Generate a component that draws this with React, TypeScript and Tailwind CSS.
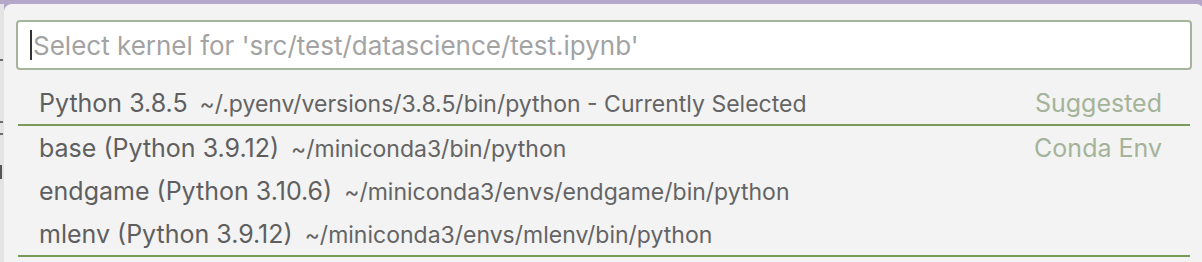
import React from "react";

type Kernel = {
  label: string;
  description: string;
  tag?: string;
};

const groups: Kernel[][] = [
  [
    {
      label: "Python 3.8.5",
      description: "~/.pyenv/versions/3.8.5/bin/python - Currently Selected",
      tag: "Suggested",
    },
  ],
  [
    { label: "base (Python 3.9.12)", description: "~/miniconda3/bin/python", tag: "Conda Env" },
    { label: "endgame (Python 3.10.6)", description: "~/miniconda3/envs/endgame/bin/python" },
    { label: "mlenv (Python 3.9.12)", description: "~/miniconda3/envs/mlenv/bin/python" },
  ],
];

function KernelRow({ kernel }: { kernel: Kernel }) {
  return (
    <div className="flex items-center h-[43px] pt-[3px] pl-[21px] pr-[28px] text-[25px] whitespace-nowrap">
      <span className="text-[#5f5f5f]">{kernel.label}</span>
      <span className="ml-[12px] text-[23px] text-[#646464]">{kernel.description}</span>
      <span className="ml-auto text-[#a4b399]">{kernel.tag}</span>
    </div>
  );
}

export default function App() {
  return (
    <div
      className="w-[1202px] h-[262px] flex flex-col bg-[#b4a7c9] overflow-hidden"
      style={{ fontFamily: "Inter, 'Noto Sans', sans-serif" }}
    >
      <div className="h-[4px] shrink-0" />
      <div className="flex flex-1">
        {/* editor behind the picker */}
        <div className="w-[4px] bg-[#e4e4e4] flex flex-col">
          <div className="h-[55px]" />
          <div className="h-[2px] w-[3px] bg-[#6b6b6b]" />
          <div className="h-[60px]" />
          <div className="h-[2px] w-[3px] bg-[#6b6b6b]" />
          <div className="h-[10px]" />
          <div className="h-[2px] w-[3px] bg-[#6b6b6b]" />
          <div className="h-[30px]" />
          <div className="h-[14px] w-[2px] bg-[#555]" />
        </div>
        <div className="flex-1 -mr-[2px] bg-[#f3f3f3] rounded-t-[8px] pt-[16px] pl-[12px] pr-[12px]">
          <div className="h-[50px] bg-white border-2 border-[#a5b49a] rounded-[4px] flex items-center pl-[12px]">
            <div className="w-[2px] h-[30px] bg-[#333]" />
            <span className="ml-[1px] text-[26px] text-[#a3a3a3]">
              Select kernel for 'src/test/datascience/test.ipynb'
            </span>
          </div>
          <div className="mt-[11px] ml-[2px] mr-[2px]">
            {groups.map((g, i) => (
              <div key={i} className="border-b-2 border-[#7a9a5a]">
                {g.map(k => (
                  <KernelRow key={k.label} kernel={k} />
                ))}
              </div>
            ))}
          </div>
        </div>
      </div>
    </div>
  );
}
